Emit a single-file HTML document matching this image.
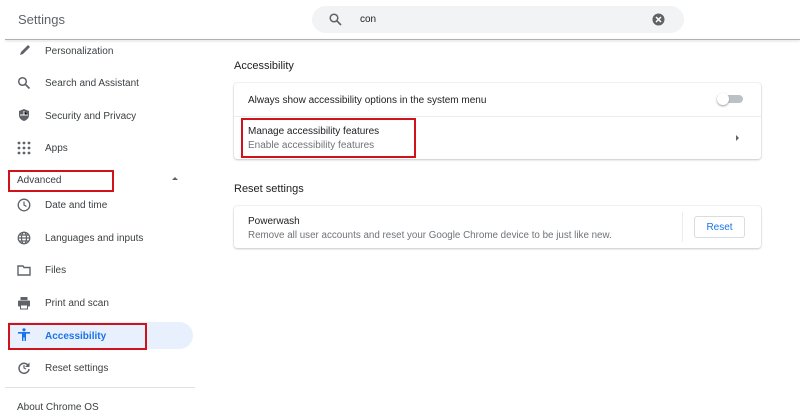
<!DOCTYPE html><html><head><style>
body{margin:0;width:800px;height:420px;background:#fff;font-family:"Liberation Sans",sans-serif;position:relative;overflow:hidden;color:#3c4043}
.a{position:absolute}
.t{font-size:10px;color:#3c4043;margin-top:1px}
.ic{position:absolute;left:17px;width:14px;height:14px}
.box{position:absolute;border:2px solid #d0121b;box-sizing:border-box}
</style></head><body>
<div class="a" style="left:18px;top:12px;font-size:13px;color:#5f6368">Settings</div>
<div class="a" style="left:312px;top:6px;width:372px;height:27px;background:#f1f3f4;border-radius:14px"></div>
<svg class="a" style="left:329px;top:13px" width="13" height="13" viewBox="0 0 13 13"><circle cx="5" cy="5" r="3.8" fill="none" stroke="#5f6368" stroke-width="1.5"/><path d="M8 8l4 4" stroke="#5f6368" stroke-width="1.6"/></svg>
<div class="a" style="left:360px;top:14px;font-size:10px;color:#202124">con</div>
<svg class="a" style="left:652px;top:13px" width="13" height="13" viewBox="0 0 13 13"><circle cx="6.5" cy="6.5" r="6" fill="#5f6368"/><path d="M4 4l5 5M9 4l-5 5" stroke="#fff" stroke-width="1.5"/></svg>
<div class="a" style="left:5px;top:39px;width:795px;height:1px;background:#b0b0b0;box-shadow:0 1px 2px #ccc"></div>

<svg class="ic" style="top:43px" viewBox="0 0 14 14"><path d="M3 12l1-3 7-7 2 2-7 7z" fill="#5f6368"/></svg>
<div class="a t" style="left:45px;top:45px">Personalization</div>
<svg class="ic" style="top:76px" viewBox="0 0 14 14"><circle cx="5.5" cy="5.5" r="3.8" fill="none" stroke="#5f6368" stroke-width="1.5"/><path d="M8.5 8.5l4 4" stroke="#5f6368" stroke-width="1.6"/></svg>
<div class="a t" style="left:45px;top:77px">Search and Assistant</div>
<svg class="ic" style="top:108px" viewBox="0 0 14 14"><path d="M7 1l5 2v4c0 3-2 5-5 6-3-1-5-3-5-6V3z" fill="#5f6368"/><path d="M7 3v4h4M7 7H3" stroke="#fff" stroke-width="1"/></svg>
<div class="a t" style="left:45px;top:110px">Security and Privacy</div>
<svg class="ic" style="top:141px" viewBox="0 0 14 14" fill="#5f6368"><circle cx="2" cy="2" r="1.4"/><circle cx="7" cy="2" r="1.4"/><circle cx="12" cy="2" r="1.4"/><circle cx="2" cy="7" r="1.4"/><circle cx="7" cy="7" r="1.4"/><circle cx="12" cy="7" r="1.4"/><circle cx="2" cy="12" r="1.4"/><circle cx="7" cy="12" r="1.4"/><circle cx="12" cy="12" r="1.4"/></svg>
<div class="a t" style="left:45px;top:142px">Apps</div>
<div class="a t" style="left:17px;top:174px">Advanced</div>
<div class="a" style="left:172px;top:177px;width:0;height:0;border-left:3px solid transparent;border-right:3px solid transparent;border-bottom:3px solid #5f6368"></div>
<div class="box" style="left:8px;top:170px;width:106px;height:22px"></div>
<svg class="ic" style="top:198px" viewBox="0 0 14 14"><circle cx="7" cy="7" r="5.8" fill="none" stroke="#5f6368" stroke-width="1.3"/><path d="M7 3.5V7l2.5 1.5" fill="none" stroke="#5f6368" stroke-width="1.2"/></svg>
<div class="a t" style="left:45px;top:199px">Date and time</div>
<svg class="ic" style="top:231px" viewBox="0 0 14 14" fill="none" stroke="#5f6368" stroke-width="1.2"><circle cx="7" cy="7" r="5.8"/><ellipse cx="7" cy="7" rx="2.5" ry="5.8"/><path d="M1.2 7h11.6M2 4h10M2 10h10"/></svg>
<div class="a t" style="left:45px;top:232px">Languages and inputs</div>
<svg class="ic" style="top:263px" viewBox="0 0 14 14"><path d="M1 3h5l1 1.5h6V12H1z" fill="none" stroke="#5f6368" stroke-width="1.4"/></svg>
<div class="a t" style="left:45px;top:264px">Files</div>
<svg class="ic" style="top:296px" viewBox="0 0 14 14" fill="#5f6368"><rect x="3.5" y="1" width="7" height="3"/><rect x="1" y="4.5" width="12" height="6" rx="1"/><rect x="3.5" y="9" width="7" height="4" fill="#fff" stroke="#5f6368"/></svg>
<div class="a t" style="left:45px;top:297px">Print and scan</div>
<div class="a" style="left:8px;top:322px;width:185px;height:27px;background:#e8f0fe;border-radius:0 14px 14px 0"></div>
<svg class="ic" style="top:328px" viewBox="0 0 14 14" fill="#1a73e8"><circle cx="7" cy="1.8" r="1.6"/><path d="M1 4h12v1.6H9V13H7.6V9.5H6.4V13H5V5.6H1z"/></svg>
<div class="a" style="left:45px;top:331px;font-size:10px;color:#1a73e8;font-weight:bold">Accessibility</div>
<div class="box" style="left:8px;top:323px;width:139px;height:27px"></div>
<svg class="ic" style="top:361px" viewBox="0 0 14 14"><path d="M11.5 5A5 5 0 1 0 12 8" fill="none" stroke="#5f6368" stroke-width="1.5"/><path d="M12.5 1.5V6H8z" fill="#5f6368"/><path d="M7 4v3l2 1" fill="none" stroke="#5f6368" stroke-width="1.2"/></svg>
<div class="a t" style="left:45px;top:362px">Reset settings</div>
<div class="a" style="left:5px;top:387px;width:190px;height:1px;background:#e0e0e0"></div>
<div class="a t" style="left:17px;top:401px">About Chrome OS</div>

<div class="a" style="left:234px;top:60px;font-size:11px;color:#202124">Accessibility</div>
<div class="a" style="left:234px;top:83px;width:527px;height:76px;background:#fff;border-radius:3px;box-shadow:0 0 1px #bbb,0 1px 2px #ccc"></div>
<div class="a t" style="left:248px;top:94px;color:#202124">Always show accessibility options in the system menu</div>
<div class="a" style="left:719px;top:95px;width:24px;height:8px;border-radius:4px;background:#bdc1c6"></div>
<div class="a" style="left:717px;top:93px;width:12px;height:12px;border-radius:50%;background:#fff;box-shadow:0 1px 2px #999"></div>
<div class="a" style="left:234px;top:116px;width:527px;height:1px;background:#ececec"></div>
<div class="a t" style="left:248px;top:125px;color:#202124">Manage accessibility features</div>
<div class="a" style="left:248px;top:140px;font-size:10px;color:#6f7378">Enable accessibility features</div>
<div class="a" style="left:736px;top:135px;width:0;height:0;border-top:3px solid transparent;border-bottom:3px solid transparent;border-left:3px solid #5f6368"></div>
<div class="box" style="left:241px;top:118px;width:175px;height:40px"></div>

<div class="a" style="left:234px;top:183px;font-size:11px;color:#202124">Reset settings</div>
<div class="a" style="left:234px;top:206px;width:527px;height:42px;background:#fff;border-radius:3px;box-shadow:0 0 1px #bbb,0 1px 2px #ccc"></div>
<div class="a t" style="left:248px;top:215px;color:#202124">Powerwash</div>
<div class="a" style="left:248px;top:230px;font-size:9.8px;color:#6f7378">Remove all user accounts and reset your Google Chrome device to be just like new.</div>
<div class="a" style="left:682px;top:212px;width:1px;height:30px;background:#ececec"></div>
<div class="a" style="left:694px;top:216px;width:51px;height:22px;border:1px solid #dadce0;border-radius:3px;box-sizing:border-box;font-size:10px;color:#1a73e8;text-align:center;line-height:21px">Reset</div>
</body></html>
